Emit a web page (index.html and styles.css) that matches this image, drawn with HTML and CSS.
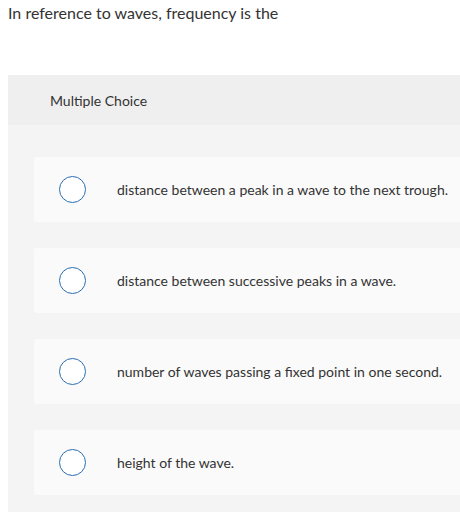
FILE: index.html
```html
<!DOCTYPE html>
<html>
<head>
<meta charset="utf-8">
<link rel="stylesheet" href="styles.css">
</head>
<body>
<p class="question">In reference to waves, frequency is the</p>
<div class="panel">
  <div class="panel-header">Multiple Choice</div>
  <div class="options">
    <div class="option"><span class="radio"></span><span class="label">distance between a peak in a wave to the next trough.</span></div>
    <div class="option"><span class="radio"></span><span class="label">distance between successive peaks in a wave.</span></div>
    <div class="option"><span class="radio"></span><span class="label">number of waves passing a fixed point in one second.</span></div>
    <div class="option"><span class="radio"></span><span class="label">height of the wave.</span></div>
  </div>
</div>
</body>
</html>
```
FILE: styles.css
```css
html, body {
  margin: 0;
  padding: 0;
  overflow: hidden;
  background: #ffffff;
}
body {
  font-family: "Lato", "Liberation Sans", sans-serif;
  color: #333333;
}
.question {
  margin: 0;
  padding: 3px 8px 0 8px;
  height: 72px;
  font-size: 16px;
  line-height: 19px;
  color: #333333;
}
.panel {
  margin-left: 8px;
  background: #f4f4f4;
  padding-bottom: 40px;
}
.panel-header {
  background: #efefef;
  height: 50px;
  display: flex;
  align-items: center;
  padding-left: 42px;
  font-size: 14px;
}
.options {
  display: flex;
  flex-direction: column;
  gap: 26px;
  padding: 32px 0 0 26px;
}
.option {
  background: #fafafa;
  border-radius: 3px 0 0 3px;
  height: 65px;
  display: flex;
  align-items: center;
}
.radio {
  box-sizing: border-box;
  width: 27px;
  height: 27px;
  border: 1.5px solid #2a6db0;
  border-radius: 50%;
  background: #ffffff;
  margin-left: 25px;
  flex: none;
}
.label {
  margin-left: 31px;
  font-size: 14px;
  color: #333333;
  white-space: nowrap;
}
```
